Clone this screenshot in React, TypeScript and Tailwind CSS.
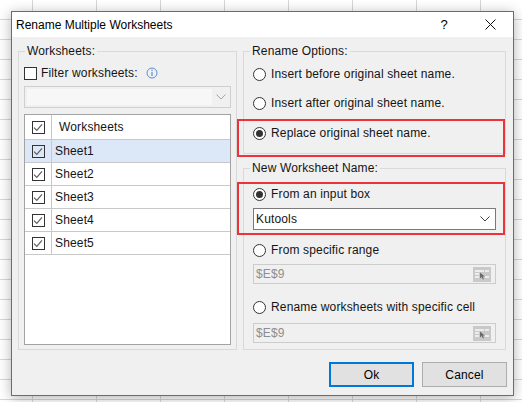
import React from "react";

const CheckMark = () => (
  <svg width="10" height="9" viewBox="0 0 10 9" className="block">
    <path d="M1 4.6 L3.8 7.4 L9 1.4" fill="none" stroke="#5f5f5f" strokeWidth="1.2" />
  </svg>
);

function CheckBox({ checked, white }: { checked?: boolean; white?: boolean }) {
  return (
    <span
      className={
        white
          ? "flex h-[13px] w-[13px] shrink-0 items-center justify-center border border-[#333333] bg-white"
          : "flex h-[13px] w-[13px] shrink-0 items-center justify-center border border-[#333333]"
      }
    >
      {checked && <CheckMark />}
    </span>
  );
}

function Radio({ checked }: { checked?: boolean }) {
  return (
    <span className="flex h-[13px] w-[13px] shrink-0 items-center justify-center rounded-full border border-[#333333] bg-white">
      {checked && <span className="h-[7px] w-[7px] rounded-full bg-[#333333]" />}
    </span>
  );
}

function RadioRow({ label, checked, className }: { label: string; checked?: boolean; className: string }) {
  return (
    <div className={className}>
      <Radio checked={checked} />
      <span>{label}</span>
    </div>
  );
}

const Chevron = ({ color }: { color: string }) => (
  <svg width="10" height="6" viewBox="0 0 10 6" className="block">
    <path d="M0.5 0.5 L5 5 L9.5 0.5" fill="none" stroke={color} strokeWidth="1" />
  </svg>
);

const InfoIcon = () => (
  <svg width="12" height="12" viewBox="0 0 12 12" className="block">
    <circle cx="6" cy="6" r="5" fill="none" stroke="#5a8fd4" strokeWidth="1" />
    <rect x="5.4" y="2.6" width="1.2" height="1.2" fill="#5a8fd4" />
    <rect x="5.4" y="4.8" width="1.2" height="4.2" fill="#5a8fd4" />
  </svg>
);

// small "select a range" button shown inside the cell reference boxes
const RangeIcon = () => (
  <svg width="18" height="15" viewBox="0 0 18 15" className="block">
    <rect x="0" y="0" width="18" height="15" fill="#c9c9c9" />
    <rect x="2" y="3" width="9" height="2" fill="#ececec" />
    <rect x="2" y="6" width="4" height="2" fill="#ececec" />
    <rect x="2" y="9" width="4" height="2" fill="#ececec" />
    <rect x="12" y="3" width="4" height="2" fill="#ececec" />
    <rect x="12" y="9" width="4" height="2" fill="#ececec" />
    <path d="M7 5.5 L7 11.5 L8.6 10 L10 12.5 L11 12 L9.7 9.5 L11.8 9.5 Z" fill="#6b6b6b" />
  </svg>
);

function RefBox({ className }: { className: string }) {
  return (
    <div className={className}>
      <span className="pl-[2px] text-[#8e8e8e]">$E$9</span>
      <span className="ml-auto mr-[4px]">
        <RangeIcon />
      </span>
    </div>
  );
}

const sheets = ["Sheet1", "Sheet2", "Sheet3", "Sheet4", "Sheet5"];

export default function App() {
  return (
    <div className="h-[402px] w-[522px] overflow-hidden bg-white bg-[linear-gradient(to_right,#d7d7d7_1px,transparent_1px),linear-gradient(to_bottom,#d7d7d7_1px,transparent_1px)] bg-[size:64px_20px] bg-[position:32px_19px] pl-[11px] pt-[11px] font-['Liberation_Sans',Arial,sans-serif] text-[12px] leading-[16px] text-[#141414]">
      <div className="relative flex h-[385px] w-[503px] flex-col border border-[#2a7ad2] bg-[#f0f0f0] shadow-[0_2px_12px_rgba(0,0,0,0.3)]">
        {/* title bar */}
        <div className="flex h-[25px] shrink-0 items-center bg-white">
          <span className="pl-[4px] text-black">Rename Multiple Worksheets</span>
          <div className="ml-auto flex h-full">
            <div className="flex w-[46px] items-center justify-center text-[13px] text-black">?</div>
            <div className="flex w-[46px] items-center justify-center">
              <svg width="11" height="11" viewBox="0 0 11 11" className="block">
                <path d="M0.5 0.5 L10.5 10.5 M10.5 0.5 L0.5 10.5" stroke="#111" strokeWidth="1" />
              </svg>
            </div>
          </div>
        </div>

        <div className="flex flex-col px-[6px] pt-[6px] tracking-[0.15px]">
          <div className="flex gap-[6px]">
            {/* worksheets list */}
            <fieldset className="w-[219px] border border-[#d9d9d9] px-[5px] pb-[4px] pt-[6px]">
              <legend className="ml-[1px] px-[2px] leading-[16px]">Worksheets:</legend>
              <div className="flex h-[16px] items-center">
                <CheckBox white />
                <span className="ml-[4px]">Filter worksheets:</span>
                <span className="ml-[8px]">
                  <InfoIcon />
                </span>
              </div>
              <div className="mt-[5px] flex h-[22px] items-center border border-[#cfcfcf] bg-[#f0f0f0] pl-[2px]">
                <div className="h-[16px] w-[185px] bg-[#f7f7f7]" />
                <span className="ml-auto mr-[4px]">
                  <Chevron color="#a6a6a6" />
                </span>
              </div>
              <div className="mt-[6px] h-[231px] border border-[#a3a3a3] bg-white">
                <div className="flex h-[25px] border-b border-[#c8c8c8]">
                  <div className="flex w-[27px] items-center justify-center border-r border-[#c8c8c8]">
                    <CheckBox checked />
                  </div>
                  <div className="flex items-center pl-[7px]">Worksheets</div>
                </div>
                {sheets.map((s, i) => (
                  <div
                    key={s}
                    className={
                      i === 0
                        ? "flex h-[23px] border-b border-[#c8c8c8] bg-[#dce7f8]"
                        : "flex h-[23px] border-b border-[#c8c8c8]"
                    }
                  >
                    <div className="flex w-[27px] items-center justify-center border-r border-[#c8c8c8]">
                      <CheckBox checked />
                    </div>
                    <div className="flex items-center pl-[3px]">{s}</div>
                  </div>
                ))}
              </div>
            </fieldset>

            <div className="flex w-[263px] flex-col gap-[6px]">
              <fieldset className="border border-[#d9d9d9] px-[9px] pb-[12px] pt-[7px]">
                <legend className="ml-[-3px] px-[2px] leading-[16px]">Rename Options:</legend>
                <RadioRow className="flex h-[16px] items-center gap-[5px]" label="Insert before original sheet name." />
                <RadioRow className="mt-[13px] flex h-[16px] items-center gap-[5px]" label="Insert after original sheet name." />
                <RadioRow className="mt-[14px] flex h-[16px] items-center gap-[5px]" label="Replace original sheet name." checked />
              </fieldset>

              <fieldset className="border border-[#d9d9d9] px-[9px] pb-[6px] pt-[10px]">
                <legend className="ml-[-3px] px-[2px] leading-[16px]">New Worksheet Name:</legend>
                <RadioRow className="flex h-[16px] items-center gap-[5px]" label="From an input box" checked />
                <div className="mt-[6px] flex h-[22px] items-center border border-[#7a7a7a] bg-white">
                  <span className="pl-[2px]">Kutools</span>
                  <span className="ml-auto mr-[5px]">
                    <Chevron color="#404040" />
                  </span>
                </div>
                <RadioRow className="mt-[12px] flex h-[16px] items-center gap-[5px]" label="From specific range" />
                <RefBox className="mt-[6px] flex h-[20px] items-center border border-[#cccccc] bg-[#f0f0f0]" />
                <RadioRow className="mt-[15px] flex h-[16px] items-center gap-[5px]" label="Rename worksheets with specific cell" />
                <RefBox className="mt-[8px] flex h-[20px] items-center border border-[#cccccc] bg-[#f0f0f0]" />
              </fieldset>
            </div>
          </div>

          <div className="mt-[12px] flex justify-end gap-[8px]">
            <button className="flex h-[25px] w-[85px] items-center justify-center border-2 border-[#0078d7] bg-[#e1e1e1] text-black">
              Ok
            </button>
            <button className="flex h-[25px] w-[85px] items-center justify-center border border-[#adadad] bg-[#e1e1e1] text-black">
              Cancel
            </button>
          </div>
        </div>

        {/* highlight frames drawn over the options */}
        <div className="pointer-events-none absolute left-[225px] top-[107px] h-[38px] w-[268px] border-2 border-[#ec3339]" />
        <div className="pointer-events-none absolute left-[225px] top-[170px] h-[53px] w-[268px] border-2 border-[#ec3339]" />
      </div>
    </div>
  );
}
